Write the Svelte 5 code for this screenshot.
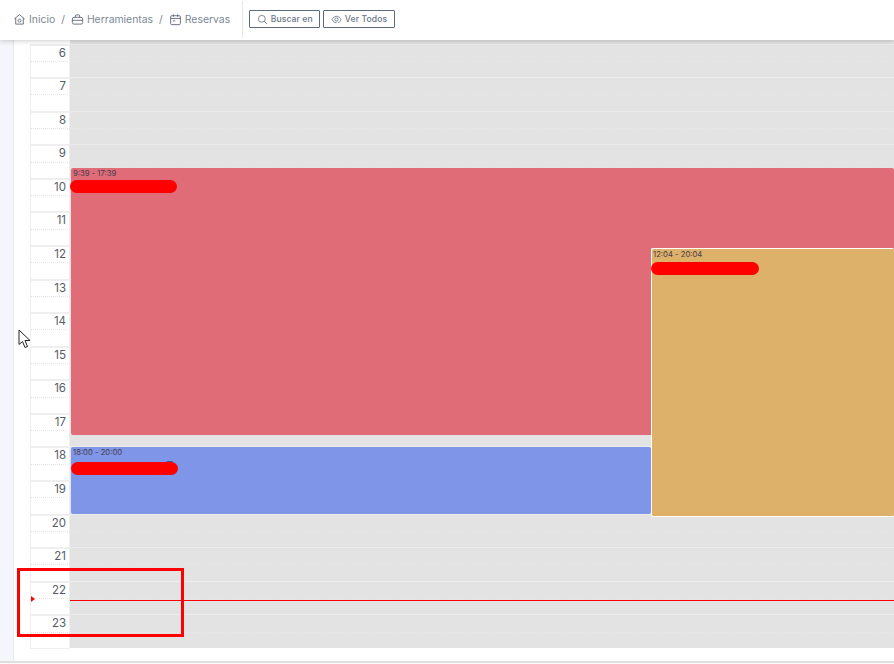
<script>
  const hours = [6, 7, 8, 9, 10, 11, 12, 13, 14, 15, 16, 17, 18, 19, 20, 21, 22, 23];

  // offsets are measured from the top of the hour grid, in px
  const events = [
    { time: '9:39 - 17:39', cls: 'red', left: 1, right: 0, top: 124.5, height: 267, barLeft: -1, barTop: 12, barWidth: 107 },
    { time: '18:00 - 20:00', cls: 'blue', left: 1, right: 243, top: 403.5, height: 67, barLeft: 0, barTop: 15, barWidth: 107 },
    { time: '12:04 - 20:04', cls: 'orange', left: 581, right: 0, top: 204.5, height: 268.5, barLeft: -1, barTop: 13, barWidth: 108 },
  ];
</script>

<div class="page">
  <header class="topbar">
    <nav class="crumbs">
      <span class="crumb">
        <svg viewBox="0 0 24 24" class="ico"><path d="M2.500 11 12 3l9.500 8" /><path d="M5 9v11.500h14V9" /><circle cx="12" cy="14" r="2.800" /></svg>
        Inicio
      </span>
      <span class="sep">/</span>
      <span class="crumb">
        <svg viewBox="0 0 24 24" class="ico"><rect x="2.500" y="8" width="19" height="12.500" rx="3" /><path d="M8 8V5.500a2 2 0 0 1 2-2h4a2 2 0 0 1 2 2V8" /><path d="M2.500 13.500h19" /></svg>
        Herramientas
      </span>
      <span class="sep">/</span>
      <span class="crumb">
        <svg viewBox="0 0 24 24" class="ico"><rect x="3" y="5" width="18" height="16.500" rx="2" /><path d="M3 10h18M8 2.500v4.500M16 2.500v4.500" /><path d="M7.500 14.500h4" /></svg>
        Reservas
      </span>
    </nav>
    <div class="actions">
      <button class="btn">
        <svg viewBox="0 0 24 24" class="ico small"><circle cx="10.500" cy="10.500" r="7.500" /><path d="m16 16 6 6" /></svg>
        Buscar en
      </button>
      <button class="btn">
        <svg viewBox="0 0 24 24" class="ico small"><path d="M12 19c-4 0-7.500-2.500-10-7 2.500-4.500 6-7 10-7s7.500 2.500 10 7c-.6 1.100-1.200 2-1.900 2.900" /><circle cx="12" cy="12" r="3.500" /><path d="m15 17 2 2 3.500-3.500" /></svg>
        Ver Todos
      </button>
    </div>
  </header>

  <main class="card">
    <div class="calendar">
      <div class="gutter">
        {#each hours as h}
          <div class="hour"><span class="num">{h}</span></div>
        {/each}
        <span class="now-marker"></span>
      </div>

      <div class="grid">
        {#each hours as h}
          <div class="slot"></div>
        {/each}

        {#each events as ev}
          <div class="event {ev.cls}" style="left:{ev.left}px; right:{ev.right}px; top:{ev.top}px; height:{ev.height}px">
            <span class="time">{ev.time}</span>
            {#if ev.cls === 'blue'}<span class="peek"></span>{/if}
            <span class="scribble" style="left:{ev.barLeft}px; top:{ev.barTop}px; width:{ev.barWidth}px"></span>
          </div>
        {/each}

        <div class="now-line"></div>
      </div>
    </div>
  </main>

  <div class="pagefoot"></div>

  <div class="annotation"></div>

  <svg class="cursor" viewBox="0 0 14 20" width="14" height="20">
    <path d="M1 1v14.500l3.500-3 2.500 6 2.500-1-2.500-6h5Z" />
  </svg>
</div>

<style>
  :global(body) {
    margin: 0;
    font-family: Inter, "Liberation Sans", sans-serif;
  }

  .page {
    position: relative;
    width: 894px;
    height: 664px;
    overflow: hidden;
    background: #f4f6fb;
    display: flex;
    flex-direction: column;
  }

  .topbar {
    height: 40px;
    flex: none;
    box-sizing: border-box;
    padding-bottom: 2px;
    background: #fff;
    display: flex;
    align-items: center;
    box-shadow: 0 1px 5px rgba(0, 0, 0, 0.2);
    position: relative;
    z-index: 5;
  }

  .crumbs {
    display: flex;
    align-items: center;
    gap: 5px;
    padding-left: 13px;
    padding-right: 12px;
    height: 37px;
    border-right: 1px solid #e4e6ea;
    color: #7b8794;
    font-size: 10.400px;
  }

  .crumb {
    display: flex;
    align-items: center;
    gap: 3px;
  }

  .sep {
    margin: 0 1px;
  }

  .ico {
    width: 13px;
    height: 13px;
    fill: none;
    stroke: #5f6b7a;
    stroke-width: 1.700;
  }

  .ico.small {
    width: 11px;
    height: 11px;
  }

  .actions {
    display: flex;
    gap: 3px;
    margin-left: 6px;
  }

  .btn {
    height: 18px;
    padding: 0 6.500px;
    display: flex;
    align-items: center;
    gap: 3px;
    background: #fff;
    border: 1px solid #5d6b7c;
    border-radius: 1px;
    color: #6b7683;
    font: 500 8.600px Inter, "Liberation Sans", sans-serif;
    letter-spacing: 0.1px;
  }

  .card {
    flex: 1;
    margin-left: 13px;
    padding-left: 16px;
    background: #fff;
    border-left: 1px solid #e6e9ef;
    border-bottom-left-radius: 3px;
  }

  .pagefoot {
    flex: none;
    height: 1px;
    background: #fbfbfb;
    border-top: 2px solid #dfdfdf;
  }

  .calendar {
    display: flex;
    align-items: flex-start;
    padding-top: 3.500px;
    background: linear-gradient(#e3e3e3, #e3e3e3) 40px 0 / 100% 4px no-repeat;
  }

  .gutter {
    flex: none;
    position: relative;
    border-left: 1px solid #eeeff1;
    border-right: 1px solid #eeeff1;
    border-bottom: 1px solid #eeeff1;
    box-sizing: border-box;
    width: 40px;
  }

  .hour {
    height: 33.580px;
    box-sizing: border-box;
    border-top: 2px solid #efefef;
    display: flex;
    justify-content: flex-end;
    padding: 0 3px 0 0;
    background: linear-gradient(90deg, #e4e4e4 50%, transparent 50%) 0 15.300px / 2px 1px repeat-x;
  }

  .num {
    font-size: 11.500px;
    line-height: 14px;
    color: #555c68;
  }

  .now-marker {
    position: absolute;
    left: 0;
    top: 552px;
    width: 0;
    height: 0;
    border-left: 4px solid #f00;
    border-top: 3px solid transparent;
    border-bottom: 3px solid transparent;
  }

  .grid {
    flex: 1;
    position: relative;
    background: #e3e3e3;
  }

  .slot {
    height: 33.580px;
    box-sizing: border-box;
    border-top: 1px solid #ececec;
    background: linear-gradient(90deg, #e9e9e9 50%, transparent 50%) 0 16.300px / 3px 1px repeat-x;
  }

  .event {
    position: absolute;
    box-sizing: border-box;
    border-radius: 2px;
    padding: 0 2px;
    color: #473a4c;
    font-size: 7.700px;
    line-height: 11px;
  }

  .time {
    display: block;
  }

  .event.red {
    background: #e06c78;
  }

  .event.blue {
    background: #7e95e8;
  }

  .event.orange {
    background: #deb16b;
    border: 1px solid #fff;
    border-right: 0;
    padding: 0 1px;
    z-index: 1;
  }

  .scribble {
    position: absolute;
    height: 13px;
    border-radius: 7px;
    background: #f00;
  }

  /* bit of the name the marker did not quite cover */
  .peek {
    position: absolute;
    left: 95px;
    top: 14px;
    width: 7px;
    height: 3px;
    border-radius: 2px;
    background: #47518f;
  }

  .now-line {
    position: absolute;
    left: 0;
    right: 0;
    top: 556.500px;
    height: 1px;
    background: #f00;
    z-index: 2;
  }

  .annotation {
    position: absolute;
    left: 17px;
    top: 568px;
    width: 161px;
    height: 63px;
    border: 3px solid #f00;
    z-index: 6;
  }

  .cursor {
    position: absolute;
    left: 18px;
    top: 329px;
    z-index: 6;
  }

  .cursor path {
    fill: #fff;
    stroke: #222;
    stroke-width: 1;
    stroke-linejoin: round;
  }
</style>
